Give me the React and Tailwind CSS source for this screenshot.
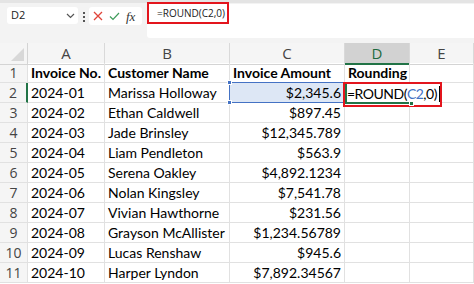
const rows = [
  ['2024-01', 'Marissa Holloway', '$2,345.6'],
  ['2024-02', 'Ethan Caldwell', '$897.45'],
  ['2024-03', 'Jade Brinsley', '$12,345.789'],
  ['2024-04', 'Liam Pendleton', '$563.9'],
  ['2024-05', 'Serena Oakley', '$4,892.1234'],
  ['2024-06', 'Nolan Kingsley', '$7,541.78'],
  ['2024-07', 'Vivian Hawthorne', '$231.56'],
  ['2024-08', 'Grayson McAllister', '$1,234.56789'],
  ['2024-09', 'Lucas Renshaw', '$945.6'],
  ['2024-10', 'Harper Lyndon', '$7,892.34567'],
]

const cols = 'grid grid-cols-[28px_77px_125px_115px_65px_64px]'
const cell = 'h-5 border-r border-b border-[#e1e1e1] font-["Lato",sans-serif] text-[14px] leading-5 text-black whitespace-nowrap'
const rowHead = 'h-5 border-r border-b border-[#e1e1e1] bg-[#f5f5f5] text-center text-[14px] leading-5 text-[#444] font-["Open_Sans",sans-serif]'

function Handle({ className }) {
  return <span className={'absolute w-[5px] h-[5px] bg-[#4472c4] border border-white ' + className} />
}

export default function App() {
  return (
    <div className="w-[474px] h-[284px] overflow-hidden bg-white select-none">
      {/* formula bar */}
      <div className="h-[43px] bg-[#f3f3f3] border-t-[3px] border-[#e4e4e4] flex items-start">
        <div className="mt-[4px] ml-[7px] w-[71px] h-[17px] bg-white rounded-[3px] flex items-center justify-between pl-[4px] pr-[3px] font-['Open_Sans',sans-serif] text-[11px] text-[#222]">
          <span>D2</span>
          <svg width="9" height="6" viewBox="0 0 9 6" fill="none" stroke="#555" strokeWidth="1.2">
            <path d="M1 1l3.5 3.5L8 1" />
          </svg>
        </div>
        <div className="mt-[9px] ml-[5px] flex flex-col gap-[2px]">
          <span className="w-[2px] h-[2px] bg-[#555]" />
          <span className="w-[2px] h-[2px] bg-[#555]" />
          <span className="w-[2px] h-[2px] bg-[#555]" />
        </div>
        <div className="ml-[4px] mt-[4px] h-[18px] w-[53px] bg-white rounded-[3px] flex items-center gap-[6px] pl-[4px]">
          <svg width="10" height="10" viewBox="0 0 10 10" stroke="#e0443a" strokeWidth="1.3">
            <path d="M1 1l8 8M9 1l-8 8" />
          </svg>
          <svg width="11" height="9" viewBox="0 0 11 9" fill="none" stroke="#3e9b5a" strokeWidth="1.2">
            <path d="M1 4.5l3 3L10 1" />
          </svg>
          <span className="font-['Liberation_Serif',serif] italic text-[13px] leading-none text-[#333]">fx</span>
        </div>
        <div className="relative ml-[5px] mt-[1px] flex-1 h-[34px] bg-white rounded-l-[3px]">
          <div className="absolute left-0 top-[-2px] w-[82px] h-[22px] border-2 border-[#e3151d] flex items-center pl-[8px] font-['Open_Sans',sans-serif] text-[10px] text-[#222]">
            =ROUND(C2,0)
          </div>
        </div>
      </div>

      {/* column headers */}
      <div className={cols + ' h-5 bg-[#f5f5f5]'}>
        <div className="relative border-r border-b border-[#d4d4d4]">
          <span className="absolute right-[3px] bottom-[3px] w-0 h-0 border-l-[13px] border-l-transparent border-b-[13px] border-b-[#d8d8d8]" />
        </div>
        {['A', 'B', 'C', 'D', 'E'].map((c) => (
          <div
            key={c}
            className={
              'border-r border-[#d9d9d9] text-center text-[15px] leading-5 font-["Open_Sans",sans-serif] ' +
              (c === 'D'
                ? 'bg-[#d2d2d2] text-[#1e6a3f] border-b-2 border-b-[#217346]'
                : 'text-[#444] border-b border-b-[#d4d4d4]')
            }
          >
            {c}
          </div>
        ))}
      </div>

      {/* header row 1 */}
      <div className={cols}>
        <div className={rowHead}>1</div>
        <div className={cell + ' font-bold pl-[3px]'}>Invoice No.</div>
        <div className={cell + ' font-bold pl-[3px]'}>Customer Name</div>
        <div className={cell + ' font-bold pl-[3px]'}>Invoice Amount</div>
        <div className={cell + ' font-bold pl-[3px]'}>Rounding</div>
        <div className={cell} />
      </div>

      {rows.map((r, i) => {
        const first = i === 0
        return (
          <div key={r[0]} className={cols}>
            <div
              className={
                rowHead + (first ? ' bg-[#d2d2d2] border-r-2 border-r-[#217346] text-[#1e6a3f]' : '')
              }
            >
              {i + 2}
            </div>
            <div className={cell + ' pl-[3px]'}>{r[0]}</div>
            <div className={cell + ' pl-[3px]'}>{r[1]}</div>
            <div className={cell + ' relative text-right pr-[3px]' + (first ? ' bg-[#dde7f5]' : '')}>
              {first && (
                <>
                  <span className="absolute inset-[-1px] border border-[#4472c4]" />
                  <Handle className="left-[-3px] top-[-3px]" />
                  <Handle className="left-[-3px] bottom-[-3px]" />
                </>
              )}
              <span className="relative">{r[2]}</span>
            </div>
            <div className={cell + ' relative'}>
              {first && (
                <div className="absolute left-[-2px] top-[-1px] w-[99px] h-[25px] border-2 border-[#e3151d] bg-white z-10">
                  <span className="absolute left-0 top-0 w-[66px] h-[20px] border-l-2 border-b-2 border-[#217346]" />
                  <span className="absolute left-[64px] top-[17px] w-[5px] h-[5px] bg-[#217346] border border-white" />
                  <div className="relative flex items-center h-[19px] pl-[2px] tracking-[-0.5px]">
                    <span>=ROUND(</span>
                    <span className="text-[#4472c4]">C2</span>
                    <span>,0)</span>
                    <span className="w-px h-[16px] bg-black ml-[2px]" />
                  </div>
                </div>
              )}
            </div>
            <div className={cell} />
          </div>
        )
      })}
    </div>
  )
}
